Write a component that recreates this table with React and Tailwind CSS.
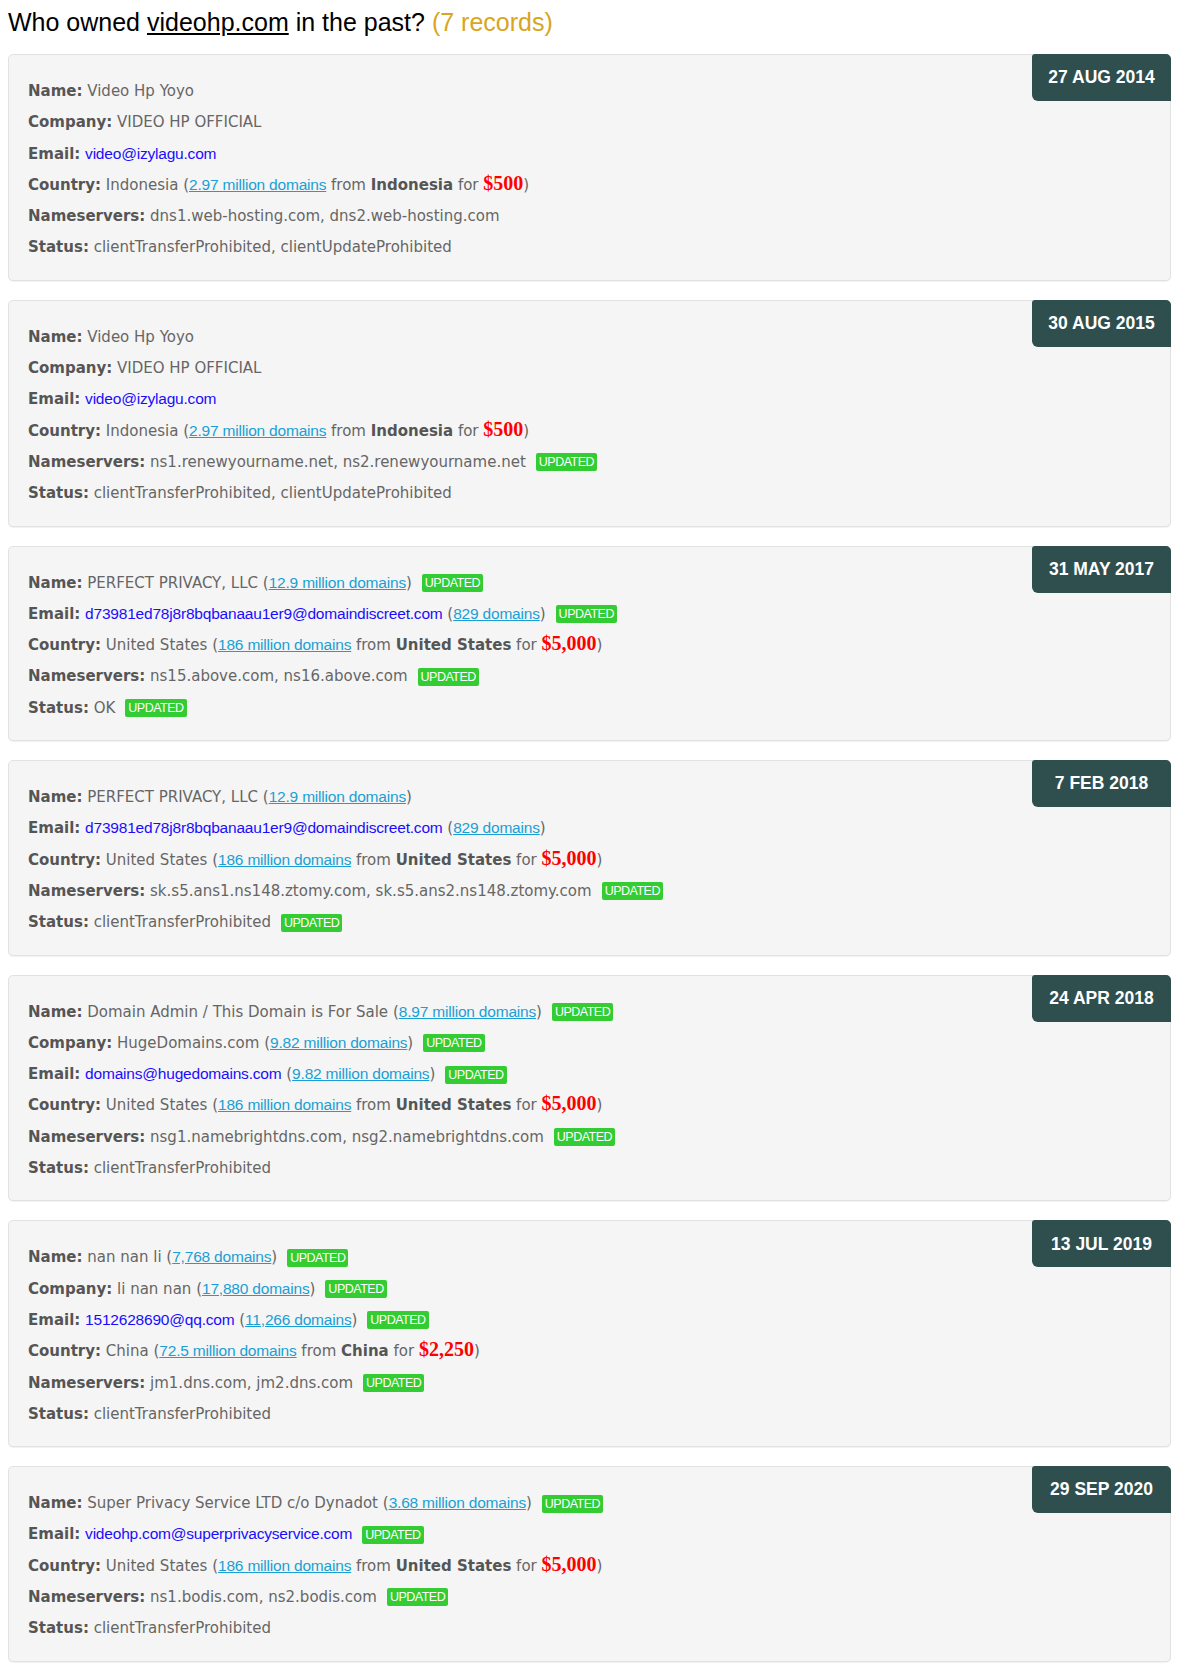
const records = [
  {
    date: '27 AUG 2014',
    rows: [
      { label: 'Name', value: 'Video Hp Yoyo' },
      { label: 'Company', value: 'VIDEO HP OFFICIAL' },
      { label: 'Email', email: 'video@izylagu.com' },
      { label: 'Country', country: 'Indonesia', count: '2.97 million domains', price: '$500' },
      { label: 'Nameservers', value: 'dns1.web-hosting.com, dns2.web-hosting.com' },
      { label: 'Status', value: 'clientTransferProhibited, clientUpdateProhibited' },
    ],
  },
  {
    date: '30 AUG 2015',
    rows: [
      { label: 'Name', value: 'Video Hp Yoyo' },
      { label: 'Company', value: 'VIDEO HP OFFICIAL' },
      { label: 'Email', email: 'video@izylagu.com' },
      { label: 'Country', country: 'Indonesia', count: '2.97 million domains', price: '$500' },
      { label: 'Nameservers', value: 'ns1.renewyourname.net, ns2.renewyourname.net', updated: true },
      { label: 'Status', value: 'clientTransferProhibited, clientUpdateProhibited' },
    ],
  },
  {
    date: '31 MAY 2017',
    rows: [
      { label: 'Name', value: 'PERFECT PRIVACY, LLC', link: '12.9 million domains', updated: true },
      { label: 'Email', email: 'd73981ed78j8r8bqbanaau1er9@domaindiscreet.com', link: '829 domains', updated: true },
      { label: 'Country', country: 'United States', count: '186 million domains', price: '$5,000' },
      { label: 'Nameservers', value: 'ns15.above.com, ns16.above.com', updated: true },
      { label: 'Status', value: 'OK', updated: true },
    ],
  },
  {
    date: '7 FEB 2018',
    rows: [
      { label: 'Name', value: 'PERFECT PRIVACY, LLC', link: '12.9 million domains' },
      { label: 'Email', email: 'd73981ed78j8r8bqbanaau1er9@domaindiscreet.com', link: '829 domains' },
      { label: 'Country', country: 'United States', count: '186 million domains', price: '$5,000' },
      { label: 'Nameservers', value: 'sk.s5.ans1.ns148.ztomy.com, sk.s5.ans2.ns148.ztomy.com', updated: true },
      { label: 'Status', value: 'clientTransferProhibited', updated: true },
    ],
  },
  {
    date: '24 APR 2018',
    rows: [
      { label: 'Name', value: 'Domain Admin / This Domain is For Sale', link: '8.97 million domains', updated: true },
      { label: 'Company', value: 'HugeDomains.com', link: '9.82 million domains', updated: true },
      { label: 'Email', email: 'domains@hugedomains.com', link: '9.82 million domains', updated: true },
      { label: 'Country', country: 'United States', count: '186 million domains', price: '$5,000' },
      { label: 'Nameservers', value: 'nsg1.namebrightdns.com, nsg2.namebrightdns.com', updated: true },
      { label: 'Status', value: 'clientTransferProhibited' },
    ],
  },
  {
    date: '13 JUL 2019',
    rows: [
      { label: 'Name', value: 'nan nan li', link: '7,768 domains', updated: true },
      { label: 'Company', value: 'li nan nan', link: '17,880 domains', updated: true },
      { label: 'Email', email: '1512628690@qq.com', link: '11,266 domains', updated: true },
      { label: 'Country', country: 'China', count: '72.5 million domains', price: '$2,250' },
      { label: 'Nameservers', value: 'jm1.dns.com, jm2.dns.com', updated: true },
      { label: 'Status', value: 'clientTransferProhibited' },
    ],
  },
  {
    date: '29 SEP 2020',
    rows: [
      { label: 'Name', value: 'Super Privacy Service LTD c/o Dynadot', link: '3.68 million domains', updated: true },
      { label: 'Email', email: 'videohp.com@superprivacyservice.com', updated: true },
      { label: 'Country', country: 'United States', count: '186 million domains', price: '$5,000' },
      { label: 'Nameservers', value: 'ns1.bodis.com, ns2.bodis.com', updated: true },
      { label: 'Status', value: 'clientTransferProhibited' },
    ],
  },
];

function Updated() {
  return (
    <span className="ml-[10px] inline-block rounded-[2px] bg-[#33cc33] px-[3px] align-middle font-['Liberation_Sans',sans-serif] text-[12.5px] leading-[18px] tracking-[-0.5px] text-white">
      UPDATED
    </span>
  );
}

function DomLink({ children }) {
  return (
    <a href="#" className="font-['Liberation_Sans',sans-serif] text-[15.5px] leading-none tracking-[-0.2px] text-[#1a9fd4] underline">
      {children}
    </a>
  );
}

function Row({ row }) {
  return (
    <div className="h-[31.3px] leading-[31.3px]">
      <b className="text-[#555]">{row.label}:</b>{' '}
      {row.value && <span>{row.value}</span>}
      {row.email && (
        <a href="#" className="font-['Liberation_Sans',sans-serif] text-[15.5px] leading-none tracking-[-0.2px] text-[#1a0dff]">
          {row.email}
        </a>
      )}
      {row.link && (
        <>
          {' '}(<DomLink>{row.link}</DomLink>)
        </>
      )}
      {row.country && (
        <>
          {row.country} (<DomLink>{row.count}</DomLink> from{' '}
          <b className="text-[#555]">{row.country}</b> for{' '}
          <b className="font-['Liberation_Serif',serif] text-[20px] leading-none text-[#ff0000]">{row.price}</b>)
        </>
      )}
      {row.updated && <Updated />}
    </div>
  );
}

function Record({ rec }) {
  return (
    <div className="relative rounded-[5px] border border-[#e2e2e2] bg-[#f5f5f5] pb-[16px] pl-[19px] pt-[21px] shadow-[0_1px_1px_rgba(0,0,0,0.06)]">
      <div className="absolute right-[-1px] top-[-1px] flex h-[47px] w-[139px] items-center justify-center rounded-bl-[6px] rounded-tl-[3px] rounded-tr-[5px] bg-[#2f4f4f] font-['Liberation_Sans',sans-serif] text-[17.5px] font-bold text-white">
        {rec.date}
      </div>
      {rec.rows.map((row, i) => (
        <Row key={i} row={row} />
      ))}
    </div>
  );
}

export default function App() {
  return (
    <div className="min-h-[1670px] bg-white pb-4 pl-2 pr-[10px] pt-[8px]">
      <h2 className="font-['Liberation_Sans',sans-serif] text-[25px] font-normal leading-[28px] text-black">
        Who owned <a href="#" className="underline">videohp.com</a> in the past?{' '}
        <span className="text-[#d9a521]">(7 records)</span>
      </h2>
      <div className="mt-[18px] flex flex-col gap-[19px] font-['DejaVu_Sans',sans-serif] text-[15px] text-[#666]">
        {records.map((rec) => (
          <Record key={rec.date} rec={rec} />
        ))}
      </div>
    </div>
  );
}
